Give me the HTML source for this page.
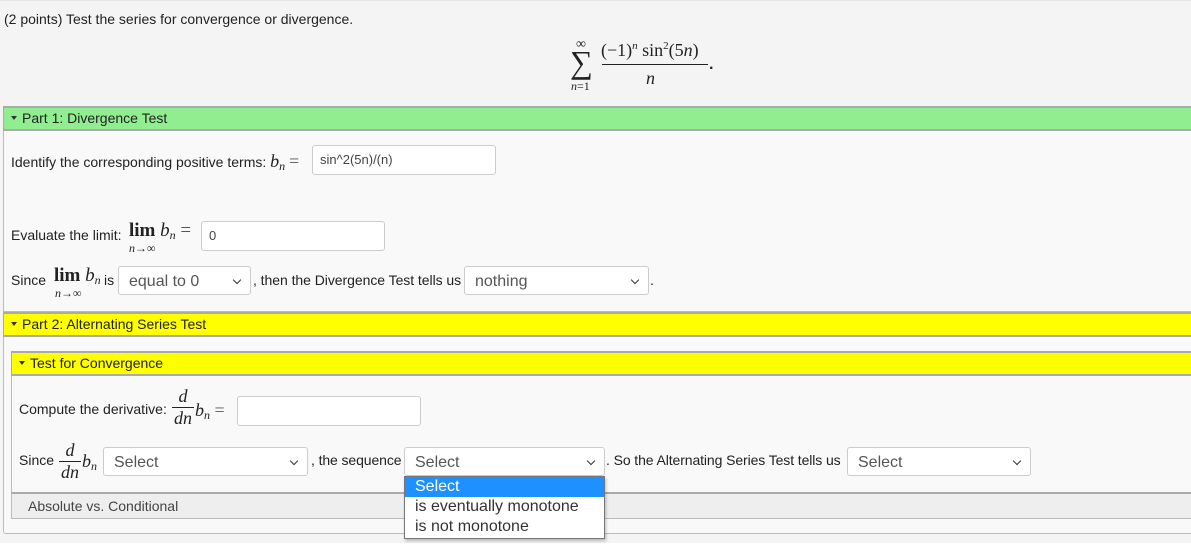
<!DOCTYPE html>
<html><head><meta charset="utf-8"><style>
*{box-sizing:border-box;margin:0;padding:0}
body{width:1191px;height:553px;overflow:hidden;background:#fff;font-family:"Liberation Sans",Arial,sans-serif;font-size:14px;color:#222;position:relative}
.a{position:absolute;white-space:nowrap}
.m{font-family:"Liberation Serif",serif;font-style:italic}
.mr{font-family:"Liberation Serif",serif}
.hdr{position:absolute;border:1px solid #aaa;border-width:2px 0 2px 1px;font-size:14px;line-height:21px;padding-left:18px;color:#222}
.hdr:before{content:"";position:absolute;left:7px;top:8px;border-left:3.5px solid transparent;border-right:3.5px solid transparent;border-top:4px solid #333}
.inp{position:absolute;background:#fff;border:1px solid #ccc;border-radius:3px;font-size:13px;color:#444;padding-left:7px;line-height:27px}
.sel{position:absolute;background:#fff;border:1px solid #ccc;border-radius:3px;font-size:16px;color:#555;padding-left:10px;line-height:29px}
.sel:after{content:"";position:absolute;right:10px;top:10px;width:5px;height:5px;border-right:1.6px solid #333;border-bottom:1.6px solid #333;transform:rotate(45deg)}
.lim{position:absolute;text-align:center;font-family:"Liberation Serif",serif}
sub{vertical-align:-3px}
</style></head><body>
<div class="a" style="left:0;top:0;width:1191px;height:543px;background:#f4f4f4;border-top:1px solid #e6e6e6"></div>
<div class="a" style="left:4px;top:11px;font-size:14px">(2 points) Test the series for convergence or divergence.</div>
<!-- formula -->
<div class="a mr" style="left:570px;top:46px;font-size:32px;line-height:32px">∑</div>
<div class="a mr" style="left:576px;top:37px;font-size:14px">∞</div>
<div class="a m" style="left:571px;top:79px;font-size:12px">n<span class="mr" style="font-style:normal">=1</span></div>
<div class="a mr" style="left:601px;top:40px;font-size:18px">(−1)<sup class="m" style="font-size:11px">n</sup> sin<sup style="font-size:11px">2</sup>(5<span class="m">n</span>)</div>
<div class="a" style="left:602px;top:64px;width:106px;height:1px;background:#222"></div>
<div class="a m" style="left:646px;top:68px;font-size:18px">n</div>
<div class="a" style="left:709px;top:56px;font-size:16px;font-weight:bold">.</div>
<!-- part1 box -->
<div class="a" style="left:3px;top:106px;width:1190px;height:206px;background:#f9f9f9;border:1px solid #bbb"></div>
<div class="hdr" style="left:3px;top:106px;width:1190px;height:25px;background:#90ee90">Part 1: Divergence Test</div>
<div class="a" style="left:11px;top:151px">Identify the corresponding positive terms: <span class="m" style="font-size:18px">b<sub style="font-size:12px">n</sub></span> <span class="mr" style="font-size:18px;color:#555">=</span></div>
<div class="inp" style="left:312px;top:145px;width:184px;height:30px">sin^2(5n)/(n)</div>
<div class="a" style="left:11px;top:227px">Evaluate the limit:</div>
<div class="lim" style="left:129px;top:220px;font-size:19px;font-weight:bold">lim <span class="m" style="font-weight:normal">b<sub style="font-size:12px">n</sub></span> <span style="font-weight:normal;color:#555">=</span></div>
<div class="a m" style="left:129px;top:241px;font-size:12px">n<span class="mr" style="font-style:normal">→∞</span></div>
<div class="inp" style="left:201px;top:221px;width:184px;height:30px">0</div>
<div class="a" style="left:11px;top:272px">Since</div>
<div class="lim" style="left:54px;top:265px;font-size:19px;font-weight:bold">lim <span class="m" style="font-weight:normal">b<sub style="font-size:12px">n</sub></span></div>
<div class="a m" style="left:55px;top:286px;font-size:12px">n<span class="mr" style="font-style:normal">→∞</span></div>
<div class="a" style="left:104px;top:272px">is</div>
<div class="sel" style="left:118px;top:266px;width:133px;height:29px">equal to 0</div>
<div class="a" style="left:253px;top:272px;letter-spacing:-0.05px">, then the Divergence Test tells us</div>
<div class="sel" style="left:464px;top:266px;width:185px;height:29px">nothing</div>
<div class="a" style="left:650px;top:272px">.</div>
<!-- part2 -->
<div class="a" style="left:3px;top:311px;width:1190px;height:223px;background:#f9f9f9;border:1px solid #bbb;border-radius:0 0 0 3px"></div>
<div class="hdr" style="left:3px;top:312px;width:1190px;height:25px;background:#ff0">Part 2: Alternating Series Test</div>
<div class="a" style="left:11px;top:351px;width:1182px;height:168px;background:#f9f9f9;border:1px solid #bbb"></div>
<div class="hdr" style="left:11px;top:351px;width:1182px;height:25px;background:#ff0">Test for Convergence</div>
<div class="a" style="left:19px;top:401px">Compute the derivative:</div>
<div class="a m" style="left:172px;top:387px;font-size:18px;width:22px;text-align:center;line-height:19px">d<div style="height:1px;background:#222;margin:1px 0"></div>dn</div>
<div class="a m" style="left:195px;top:400px;font-size:18px">b<sub style="font-size:12px">n</sub> <span class="mr" style="font-style:normal;color:#555">=</span></div>
<div class="inp" style="left:237px;top:396px;width:184px;height:30px"></div>
<div class="a" style="left:19px;top:452px">Since</div>
<div class="a m" style="left:59px;top:441px;font-size:18px;width:22px;text-align:center;line-height:19px">d<div style="height:1px;background:#222;margin:1px 0"></div>dn</div>
<div class="a m" style="left:82px;top:451px;font-size:18px">b<sub style="font-size:12px">n</sub></div>
<div class="sel" style="left:103px;top:447px;width:205px;height:29px">Select</div>
<div class="a" style="left:311px;top:452px;letter-spacing:-0.1px">, the sequence</div>
<div class="sel" style="left:404px;top:447px;width:201px;height:29px">Select</div>
<div class="a" style="left:606px;top:452px;letter-spacing:-0.1px">. So the Alternating Series Test tells us</div>
<div class="sel" style="left:847px;top:447px;width:184px;height:29px">Select</div>
<div class="a" style="left:11px;top:492px;width:1182px;height:27px;background:#eee;border:1px solid #bbb;border-top:2px solid #aaa;padding-left:16px;line-height:24px;color:#444">Absolute vs. Conditional</div>
<!-- dropdown -->
<div class="a" style="left:404px;top:476px;width:201px;height:63px;background:#fff;border:1px solid #777;box-shadow:1px 2px 3px rgba(0,0,0,.25);font-size:16px;color:#333;line-height:20px">
<div style="background:#1e90ff;color:#fff;padding-left:10px">Select</div>
<div style="padding-left:10px">is eventually monotone</div>
<div style="padding-left:10px">is not monotone</div>
</div>
</body></html>
